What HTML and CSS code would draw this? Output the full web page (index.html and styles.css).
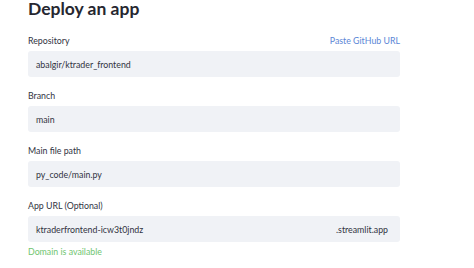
FILE: index.html
```html
<!DOCTYPE html>
<html lang="en">
<head>
    <meta charset="UTF-8">
    <meta name="viewport" content="width=device-width, initial-scale=1.0">
    <title>Deploy an app</title>
    <link rel="stylesheet" href="styles.css">
</head>
<body>
    <div class="deploy">
        <h1 class="deploy-title">Deploy an app</h1>

        <div class="field">
            <div class="field-label">
                <label for="repo">Repository</label>
                <a href="#" class="paste-link">Paste GitHub URL</a>
            </div>
            <div class="field-input">
                <span id="repo">abalgir/ktrader_frontend</span>
            </div>
        </div>

        <div class="field">
            <div class="field-label">
                <label for="branch">Branch</label>
            </div>
            <div class="field-input">
                <span id="branch">main</span>
            </div>
        </div>

        <div class="field">
            <div class="field-label">
                <label for="path">Main file path</label>
            </div>
            <div class="field-input">
                <span id="path">py_code/main.py</span>
            </div>
        </div>

        <div class="field">
            <div class="field-label">
                <label for="url">App URL (Optional)</label>
            </div>
            <div class="field-input">
                <span id="url">ktraderfrontend-icw3t0jndz</span>
                <span class="suffix">.streamlit.app</span>
            </div>
            <p class="hint">Domain is available</p>
        </div>
    </div>
</body>
</html>
```

FILE: styles.css
```css
:root {
    --text: #31333f;
    --input-bg: #f0f2f6;
    --link: #5b86d6;
    --ok: #6fc56f;
}

* {
    margin: 0;
    padding: 0;
    box-sizing: border-box;
}

body {
    background-color: #ffffff;
    font-family: Lato, "Open Sans", sans-serif;
    color: var(--text);
}

.deploy {
    width: 400px;
    padding-left: 28px;
}

.deploy-title {
    font-size: 17.5px;
    font-weight: 700;
    line-height: 17px;
    margin-bottom: 17px;
    color: #262730;
}

.field {
    margin-bottom: 12px;
}

.field-label {
    display: flex;
    justify-content: space-between;
    align-items: center;
    height: 12px;
    margin-bottom: 5px;
    font-size: 8.8px;
}

.paste-link {
    color: var(--link);
    text-decoration: none;
}

.field-input {
    display: flex;
    justify-content: space-between;
    align-items: center;
    height: 26px;
    padding: 0 12px 0 8px;
    background-color: var(--input-bg);
    border-radius: 3px;
    font-size: 8.8px;
}

.hint {
    margin-top: 4px;
    font-size: 8.8px;
    line-height: 12px;
    color: var(--ok);
}
```
